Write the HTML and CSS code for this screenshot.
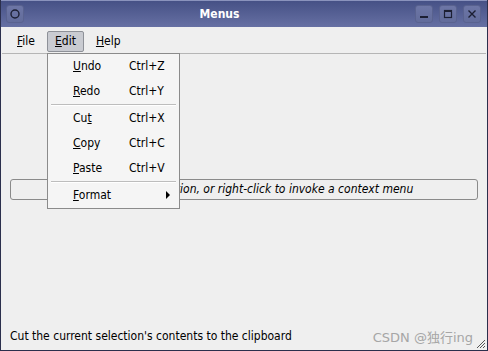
FILE: index.html
```html
<!DOCTYPE html>
<html lang="en">
<head>
  <meta charset="UTF-8">
  <title>Menus</title>
  <link rel="stylesheet" href="styles.css">
</head>
<body>
  <div class="window">
    <header class="titlebar">
      <span class="tbtn"><svg width="12" height="12" viewBox="0 0 12 12"><circle cx="6" cy="6" r="4" fill="none" stroke="#1c1f33" stroke-width="1.4"/></svg></span>
      <h1 class="title">Menus</h1>
      <span class="tbtn"><svg width="12" height="12" viewBox="0 0 12 12"><rect x="2" y="8" width="8" height="2" fill="#1c1f33"/></svg></span>
      <span class="tbtn"><svg width="12" height="12" viewBox="0 0 12 12"><rect x="2.5" y="2.5" width="7" height="7" fill="none" stroke="#1c1f33" stroke-width="1.2"/><rect x="2" y="2" width="8" height="2" fill="#1c1f33"/></svg></span>
      <span class="tbtn"><svg width="12" height="12" viewBox="0 0 12 12"><path d="M2.5 2.5 L9.5 9.5 M9.5 2.5 L2.5 9.5" stroke="#1c1f33" stroke-width="1.4"/></svg></span>
    </header>

    <nav class="menubar">
      <a><u>F</u>ile</a>
      <a class="open"><u>E</u>dit</a>
      <a><u>H</u>elp</a>
    </nav>

    <main class="central">
      <div class="info">Choose a menu option, or right-click to invoke a context menu</div>
    </main>

    <footer class="statusbar">
      <span>Cut the current selection's contents to the clipboard</span>
      <span class="mark">CSDN @独行ing</span>
      <svg class="grip" width="11" height="11" viewBox="0 0 11 11">
        <path d="M10 2 L2 10 M10 5 L5 10 M10 8 L8 10" stroke="#555" stroke-width="1"/>
      </svg>
    </footer>

    <div class="popup">
      <div class="item"><span class="label"><u>U</u>ndo</span><span class="key">Ctrl+Z</span></div>
      <div class="item"><span class="label"><u>R</u>edo</span><span class="key">Ctrl+Y</span></div>
      <div class="sep"></div>
      <div class="item"><span class="label">Cu<u>t</u></span><span class="key">Ctrl+X</span></div>
      <div class="item"><span class="label"><u>C</u>opy</span><span class="key">Ctrl+C</span></div>
      <div class="item"><span class="label"><u>P</u>aste</span><span class="key">Ctrl+V</span></div>
      <div class="sep"></div>
      <div class="item"><span class="label"><u>F</u>ormat</span><span class="arrow"></span></div>
    </div>
  </div>
</body>
</html>
```

FILE: styles.css
```css
body {
  margin: 0;
  font-family: "DejaVu Sans Condensed", "DejaVu Sans", sans-serif;
  font-stretch: condensed;
  font-size: 12px;
  color: #000;
}

.window {
  position: relative;
  width: 488px;
  height: 351px;
  box-sizing: border-box;
  border: 1px solid #2b2f4c;
  border-top: none;
  background: #efefef;
  display: flex;
  flex-direction: column;
}

.titlebar {
  height: 27px;
  box-sizing: border-box;
  background: linear-gradient(#465186, #6670a3);
  border-top: 1px solid #8a93bd;
  display: flex;
  align-items: center;
  padding: 0 6px 0 5px;
  gap: 6px;
}

.title {
  flex: 1;
  margin: 0;
  text-align: center;
  color: #fff;
  font-size: 12px;
  font-weight: bold;
}

.tbtn {
  width: 18px;
  height: 18px;
  box-sizing: border-box;
  border: 1px solid #59628f;
  border-radius: 3px;
  background: linear-gradient(#6d76a6, #626c9b);
  display: flex;
  align-items: center;
  justify-content: center;
}

.menubar {
  height: 27px;
  box-sizing: border-box;
  border-bottom: 1px solid #b5b5b5;
  margin: 0 1px;
  display: flex;
  align-items: center;
  padding: 3px 0 0 7px;
  gap: 4px;
}

.menubar a {
  padding: 2px 7px 3px;
  border: 1px solid transparent;
}

.menubar a.open {
  background: #c9cbd1;
  border-color: #8e9198;
  border-radius: 2px;
}

.central {
  flex: 1;
  padding: 125px 9px 0;
}

.info {
  height: 21px;
  box-sizing: border-box;
  border: 1px solid #8a8a8a;
  border-radius: 3px;
  font-style: italic;
  text-align: center;
  line-height: 19px;
}

.statusbar {
  height: 24px;
  display: flex;
  align-items: center;
  padding: 0 0 2px 9px;
  position: relative;
}

.statusbar .mark {
  margin-left: auto;
  margin-right: 14px;
  color: #a6a6a6;
  font-family: "DejaVu Sans", "Noto Sans CJK SC", sans-serif;
  font-stretch: normal;
  font-size: 13px;
}

.grip {
  position: absolute;
  right: 1px;
  bottom: 1px;
}

.popup {
  position: absolute;
  left: 46px;
  top: 53px;
  width: 133px;
  box-sizing: border-box;
  background: #f5f5f5;
  border: 1px solid #8b8b8b;
  padding: 0 3px;
}

.item {
  height: 25px;
  box-sizing: border-box;
  padding: 0 0 1px 22px;
  display: flex;
  align-items: center;
}

.item .label {
  width: 56px;
}

.item .arrow {
  margin-left: 37px;
  border-left: 4px solid #000;
  border-top: 4px solid transparent;
  border-bottom: 4px solid transparent;
}

.sep {
  height: 0;
  border-top: 1px solid #bdbdbd;
  border-bottom: 1px solid #fff;
}
```
